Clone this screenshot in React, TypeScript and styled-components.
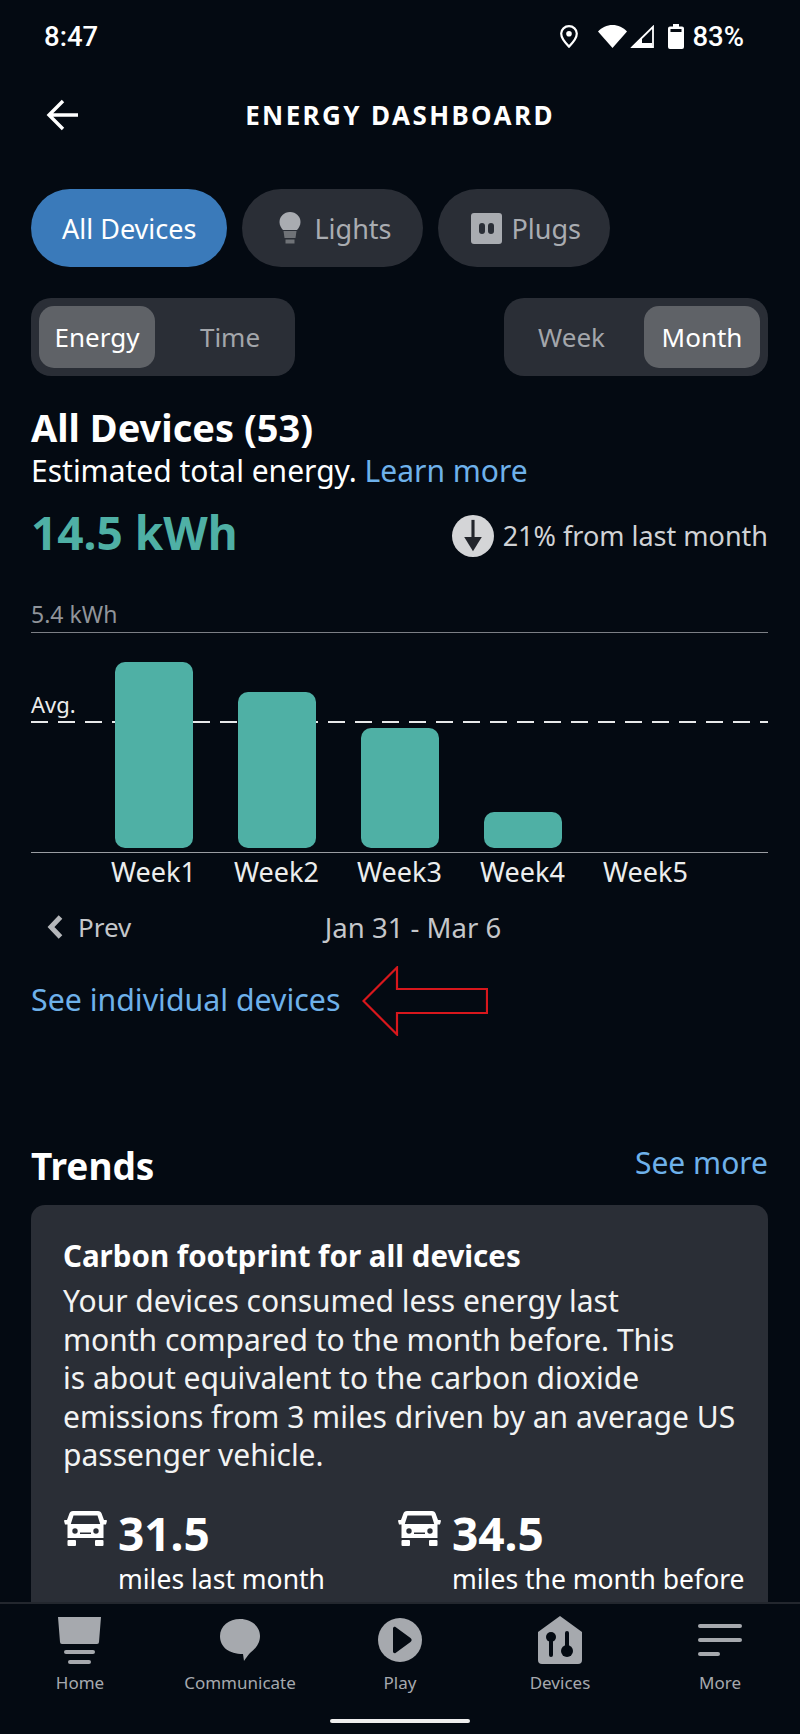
import React from 'react';
import styled, { createGlobalStyle } from 'styled-components';

const GlobalStyle = createGlobalStyle`
  html, body {
    margin: 0;
    padding: 0;
    background: #040a12;
  }
  * {
    box-sizing: border-box;
  }
`;

const Screen = styled.div`
  width: 800px;
  height: 1734px;
  display: flex;
  flex-direction: column;
  overflow: hidden;
  background: #040a12;
  color: #fff;
  font-family: 'Noto Sans', 'Open Sans', sans-serif;
`;

const StatusBar = styled.div`
  height: 72px;
  flex: 0 0 72px;
  display: flex;
  align-items: center;
  justify-content: space-between;
  padding: 0 56px 0 44px;
  font-family: Roboto, sans-serif;
  font-size: 27.5px;
  font-weight: 500;
`;

const StatusIcons = styled.div`
  display: flex;
  align-items: center;
`;

const Header = styled.header`
  position: relative;
  height: 86px;
  flex: 0 0 86px;
  display: flex;
  align-items: center;
  justify-content: center;
  padding-bottom: 1px;
`;

const BackButton = styled.div`
  position: absolute;
  left: 46px;
  top: 27px;
  display: flex;
`;

const Title = styled.h1`
  margin: 0;
  font-size: 26px;
  font-weight: 700;
  letter-spacing: 2.4px;
`;

const Main = styled.main`
  flex: 1;
  min-height: 0;
  overflow: hidden;
  padding: 31px 32px 0 31px;
`;

const Chips = styled.div`
  display: flex;
  gap: 15px;
`;

const Chip = styled.div<{ $active?: boolean; $lead?: number; $trail?: number; $gap?: number }>`
  height: 78px;
  padding: 0 ${({ $trail = 31 }) => $trail}px 0 ${({ $lead = 31 }) => $lead}px;
  display: flex;
  align-items: center;
  gap: ${({ $gap = 13 }) => $gap}px;
  border-radius: 39px;
  font-size: 27px;
  background: ${({ $active }) => ($active ? '#3a7aba' : '#2a2e36')};
  color: ${({ $active }) => ($active ? '#fff' : '#a9acb1')};
`;

const Toggles = styled.div`
  display: flex;
  justify-content: space-between;
  margin-top: 31px;
`;

const Toggle = styled.div`
  width: 264px;
  height: 78px;
  padding: 8px;
  display: flex;
  border-radius: 20px;
  background: #2a2e36;
`;

const ToggleOption = styled.div<{ $active?: boolean; $insetLeft?: number; $insetRight?: number }>`
  flex: ${({ $active }) => ($active ? '0 0 116px' : '1')};
  display: flex;
  align-items: center;
  justify-content: center;
  padding: 0 ${({ $insetRight = 0 }) => $insetRight}px 0 ${({ $insetLeft = 0 }) => $insetLeft}px;
  border-radius: 15px;
  font-size: 26px;
  background: ${({ $active }) => ($active ? '#5f6267' : 'transparent')};
  color: ${({ $active }) => ($active ? '#fff' : '#a3a6ab')};
`;

const Heading = styled.h2`
  margin: 30px 0 0;
  font-size: 38px;
  line-height: 42px;
  font-weight: 700;
`;

const Subtitle = styled.p`
  margin: 2px 0 0;
  font-size: 30px;
  line-height: 42px;
`;

const Link = styled.span`
  color: #6eb1ea;
`;

const SummaryRow = styled.div`
  display: flex;
  align-items: center;
  justify-content: space-between;
  margin-top: 9px;
  height: 62px;
`;

const Total = styled.div`
  font-size: 46px;
  font-weight: 700;
  color: #4fb0a5;
`;

const Change = styled.div`
  display: flex;
  align-items: center;
  gap: 9px;
  padding-top: 7px;
  font-size: 27px;
  color: #d0d2d5;
`;

const MaxLabel = styled.div`
  margin-top: 33px;
  font-size: 23px;
  line-height: 36px;
  color: #90949a;
`;

const Chart = styled.div`
  position: relative;
  height: 221px;
  padding: 0 0 4px 84px;
  display: flex;
  align-items: flex-end;
  gap: 45px;
  border-top: 1px solid #7c7f85;
  border-bottom: 1px solid #9a9da2;
`;

const AvgLabel = styled.div`
  position: absolute;
  left: 0;
  top: 56px;
  font-size: 22px;
  line-height: 30px;
  color: #eceded;
`;

const AvgLine = styled.div`
  position: absolute;
  left: 0;
  right: 0;
  top: 88px;
  height: 2px;
  background: repeating-linear-gradient(90deg, #e8e9ea 0 17px, transparent 17px 27px);
`;

const Bar = styled.div`
  position: relative;
  width: 78px;
  border-radius: 10px;
  background: #4fb0a5;
`;

const WeekLabels = styled.div`
  display: flex;
  padding: 2px 0 0 61px;
`;

const WeekLabel = styled.div`
  width: 123px;
  text-align: center;
  font-size: 27px;
  line-height: 34px;
  color: #eceded;
`;

const Pager = styled.div`
  position: relative;
  display: flex;
  align-items: center;
  justify-content: center;
  margin-top: 18px;
  height: 40px;
  padding-left: 27px;
  font-size: 27.5px;
  color: #c5c7ca;
`;

const Prev = styled.div`
  position: absolute;
  left: 15px;
  top: 0;
  bottom: 0;
  display: flex;
  align-items: center;
  gap: 15px;
  font-size: 26px;
`;

const IndividualRow = styled.div`
  display: flex;
  align-items: center;
  gap: 22px;
  margin-top: 17px;
  height: 70px;
  font-size: 30.3px;
  color: #6eb1ea;
`;

const ArrowSvg = styled.svg`
  display: block;
  margin-top: 4px;
`;

const TrendsRow = styled.div`
  display: flex;
  align-items: center;
  justify-content: space-between;
  margin-top: 108px;
`;

const TrendsTitle = styled.h2`
  margin: 0;
  font-size: 37px;
  line-height: 48px;
  font-weight: 700;
`;

const SeeMore = styled.div`
  padding-bottom: 7px;
  font-size: 30px;
  color: #6eb1ea;
`;

const Card = styled.section`
  margin-top: 15px;
  padding: 31px 30px 0 32px;
  height: 420px;
  border-radius: 14px 14px 0 0;
  background: #2a2e36;
`;

const CardTitle = styled.h3`
  margin: 0;
  font-size: 29.5px;
  line-height: 40px;
  font-weight: 700;
`;

const CardText = styled.p`
  margin: 6px 0 0;
  font-size: 30px;
  line-height: 38.6px;
  color: #f2f3f3;
`;

const Stats = styled.div`
  display: flex;
  margin-top: 30px;
  padding-left: 1px;
`;

const Stat = styled.div`
  flex: 0 0 334px;
  display: flex;
  gap: 11px;
`;

const CarSlot = styled.div`
  padding-top: 6px;
`;

const StatValue = styled.div`
  font-size: 46px;
  line-height: 56px;
  font-weight: 700;
`;

const StatCaption = styled.div`
  font-size: 26.5px;
  line-height: 36px;
  white-space: nowrap;
`;

const TabBar = styled.nav`
  height: 132px;
  flex: 0 0 132px;
  display: flex;
  justify-content: space-around;
  padding: 11px 0 0;
  border-top: 2px solid #23272e;
  background: #040a12;
  position: relative;
`;

const Tab = styled.div`
  width: 160px;
  display: flex;
  flex-direction: column;
  align-items: center;
  font-size: 17px;
  color: #a6a9ae;
`;

const TabIcon = styled.div`
  height: 50px;
  display: flex;
  align-items: center;
  justify-content: center;
`;

const TabLabel = styled.div`
  margin-top: 6px;
  line-height: 24px;
`;

const HomeIndicator = styled.div`
  position: absolute;
  left: 330px;
  bottom: 11px;
  width: 140px;
  height: 4px;
  border-radius: 2px;
  background: #eeeeee;
`;

const StatusIcon = styled.svg<{ $gap: number }>`
  display: block;
  margin-right: ${({ $gap }) => $gap}px;
`;

const PinIcon = () => (
  <StatusIcon $gap={20} width="18" height="23" viewBox="0 0 18 23">
    <path d="M9 1.200C4.700 1.200 1.200 4.500 1.200 8.600c0 4.600 4.500 9.800 7.800 13 3.300-3.200 7.800-8.400 7.800-13 0-4.100-3.500-7.400-7.800-7.400z" fill="none" stroke="#fff" strokeWidth="2.200" />
    <circle cx="9" cy="8.800" r="2.800" fill="#fff" />
  </StatusIcon>
);

const WifiIcon = () => (
  <StatusIcon $gap={3} width="29" height="23" viewBox="0 0 29 23">
    <path d="M0 6.500C3.800 2.500 8.800 0 14.500 0S25.200 2.500 29 6.500L14.500 23z" fill="#fff" />
  </StatusIcon>
);

const SignalIcon = () => (
  <StatusIcon $gap={14} width="24" height="23" viewBox="0 0 24 23">
    <path d="M2.500 22L23 1.800V22z" fill="none" stroke="#fff" strokeWidth="1.800" />
    <path d="M1 23l11-11v11z" fill="#fff" />
    <rect x="12" y="18" width="10" height="5" fill="#fff" />
  </StatusIcon>
);

const BatteryIcon = () => (
  <StatusIcon $gap={8} width="16" height="25" viewBox="0 0 16 25">
    <path d="M5 0h6v2.500h3a2 2 0 0 1 2 2V23a2 2 0 0 1-2 2H2a2 2 0 0 1-2-2V4.500a2 2 0 0 1 2-2h3z" fill="#fff" />
    <rect x="2.500" y="5" width="11" height="3" fill="#040a12" />
  </StatusIcon>
);

const BackIcon = () => (
  <svg width="33" height="32" viewBox="0 0 33 32">
    <path d="M32 16H4M17 2L3 16l14 14" fill="none" stroke="#fff" strokeWidth="3.400" />
  </svg>
);

const BulbIcon = () => (
  <svg width="22" height="32" viewBox="0 0 22 32">
    <path d="M11 0C5 0 0.500 4.500 0.500 10c0 3.500 1.800 6 3.500 8h14c1.700-2 3.500-4.500 3.500-8C21.500 4.500 17 0 11 0z" fill="#a9acb1" />
    <path d="M4.500 19h13l-1 7h-11z" fill="#6f7277" />
    <rect x="6.500" y="27.500" width="9" height="4" fill="#6f7277" />
  </svg>
);

const PlugIcon = () => (
  <svg width="31" height="31" viewBox="0 0 31 31">
    <rect width="31" height="31" rx="3" fill="#a9acb1" />
    <rect x="8" y="10" width="6" height="11" rx="3" fill="#2a2e36" />
    <rect x="17" y="10" width="6" height="11" rx="3" fill="#2a2e36" />
  </svg>
);

const DownIcon = () => (
  <svg width="42" height="42" viewBox="0 0 43 43">
    <circle cx="21.500" cy="21.500" r="21.500" fill="#d4d5d7" />
    <path d="M21.500 5v22" stroke="#22252b" strokeWidth="3.200" />
    <path d="M12.500 22.500h18L21.500 37z" fill="#22252b" />
  </svg>
);

const ChevronIcon = () => (
  <svg width="17" height="24" viewBox="0 0 17 24">
    <path d="M14.500 2L5 12l9.500 10" fill="none" stroke="#b5b7ba" strokeWidth="5" />
  </svg>
);

const RedArrow = () => (
  <ArrowSvg width="126" height="70" viewBox="0 0 126 70">
    <path d="M1.500 35L35 1.500V23H125V47H35V68.500z" fill="none" stroke="#d8171c" strokeWidth="2.200" />
  </ArrowSvg>
);

const CarIcon = () => (
  <svg width="43" height="35" viewBox="0 0 43 35">
    <path
      fillRule="evenodd"
      d="M9 0H34C36 0 37 1 37.600 2.500L40 9H42C43 9 43 10 42.700 11L42 13.500H39.500V27H3.500V13.500H1L.3 11C0 10 0 9 1 9H3L5.400 2.500C6 1 7 0 9 0ZM9.500 4.500L6.800 13H36.200L33.500 4.500ZM11 17.300a2.700 2.700 0 1 0 0 5.400 2.700 2.700 0 0 0 0-5.400ZM32 17.300a2.700 2.700 0 1 0 0 5.400 2.700 2.700 0 0 0 0-5.400ZM16 21.500V23H27V21.500Z"
      fill="#fff"
    />
    <rect x="3.500" y="29" width="8.500" height="6" rx="1" fill="#fff" />
    <rect x="31" y="29" width="8.500" height="6" rx="1" fill="#fff" />
  </svg>
);

const HomeIcon = () => (
  <svg width="44" height="48" viewBox="0 0 44 48">
    <path d="M0 1h43l-2 25a2 2 0 0 1-2 2H4a2 2 0 0 1-2-2z" fill="#a6a9ae" />
    <rect x="6" y="34" width="31" height="4" rx="2" fill="#a6a9ae" />
    <rect x="10" y="44" width="23" height="4" rx="2" fill="#a6a9ae" />
  </svg>
);

const CommunicateIcon = () => (
  <svg width="40" height="42" viewBox="0 0 40 42">
    <path d="M20 0c11 0 20 7 20 17 0 8-5 13-10 17-2 2-4 5-6 8l-1-7C9 35 0 28 0 17 0 7 9 0 20 0z" fill="#a6a9ae" />
  </svg>
);

const PlayIcon = () => (
  <svg width="44" height="44" viewBox="0 0 44 44">
    <circle cx="22" cy="22" r="22" fill="#a6a9ae" />
    <path d="M15 10.500c0-1.500 1.500-2 2.500-1.500l15 11c1.500 1 1.500 3 0 4l-15 11c-1 .5-2.500 0-2.500-1.500z" fill="#040a12" />
  </svg>
);

const DevicesIcon = () => (
  <svg width="44" height="48" viewBox="0 0 44 48">
    <path d="M22 0l22 16v28a4 4 0 0 1-4 4H4a4 4 0 0 1-4-4V16z" fill="#a6a9ae" />
    <circle cx="13" cy="21" r="5" fill="#040a12" />
    <rect x="11" y="23" width="4" height="18" rx="2" fill="#040a12" />
    <circle cx="29" cy="35" r="6" fill="#040a12" />
    <rect x="27" y="15" width="4" height="20" rx="2" fill="#040a12" />
  </svg>
);

const MoreIcon = () => (
  <svg width="44" height="32" viewBox="0 0 44 32">
    <rect y="0" width="44" height="4" rx="2" fill="#a6a9ae" />
    <rect y="14" width="44" height="4" rx="2" fill="#a6a9ae" />
    <rect y="28" width="22" height="4" rx="2" fill="#a6a9ae" />
  </svg>
);

const bars = [186, 156, 120, 36];
const weeks = ['Week1', 'Week2', 'Week3', 'Week4', 'Week5'];
const tabs = [
  { label: 'Home', icon: <HomeIcon /> },
  { label: 'Communicate', icon: <CommunicateIcon /> },
  { label: 'Play', icon: <PlayIcon /> },
  { label: 'Devices', icon: <DevicesIcon /> },
  { label: 'More', icon: <MoreIcon /> }
];

export default function App() {
  return (
    <Screen>
      <GlobalStyle />
      <StatusBar>
        <span>8:47</span>
        <StatusIcons>
          <PinIcon />
          <WifiIcon />
          <SignalIcon />
          <BatteryIcon />
          <span>83%</span>
        </StatusIcons>
      </StatusBar>
      <Header>
        <BackButton><BackIcon /></BackButton>
        <Title>ENERGY DASHBOARD</Title>
      </Header>
      <Main>
        <Chips>
          <Chip $active>All Devices</Chip>
          <Chip $lead={37}><BulbIcon />Lights</Chip>
          <Chip $lead={33} $trail={29} $gap={10}><PlugIcon />Plugs</Chip>
        </Chips>
        <Toggles>
          <Toggle>
            <ToggleOption $active>Energy</ToggleOption>
            <ToggleOption $insetLeft={18}>Time</ToggleOption>
          </Toggle>
          <Toggle>
            <ToggleOption $insetRight={13}>Week</ToggleOption>
            <ToggleOption $active>Month</ToggleOption>
          </Toggle>
        </Toggles>
        <Heading>All Devices (53)</Heading>
        <Subtitle>Estimated total energy. <Link>Learn more</Link></Subtitle>
        <SummaryRow>
          <Total>14.5 kWh</Total>
          <Change><DownIcon />21% from last month</Change>
        </SummaryRow>
        <MaxLabel>5.4 kWh</MaxLabel>
        <Chart>
          <AvgLabel>Avg.</AvgLabel>
          <AvgLine />
          {bars.map((height, i) => <Bar key={i} style={{ height }} />)}
        </Chart>
        <WeekLabels>
          {weeks.map(week => <WeekLabel key={week}>{week}</WeekLabel>)}
        </WeekLabels>
        <Pager>
          <Prev><ChevronIcon />Prev</Prev>
          <span>Jan 31 - Mar 6</span>
        </Pager>
        <IndividualRow>
          <span>See individual devices</span>
          <RedArrow />
        </IndividualRow>
        <TrendsRow>
          <TrendsTitle>Trends</TrendsTitle>
          <SeeMore>See more</SeeMore>
        </TrendsRow>
        <Card>
          <CardTitle>Carbon footprint for all devices</CardTitle>
          <CardText>
            Your devices consumed less energy last<br />
            month compared to the month before. This<br />
            is about equivalent to the carbon dioxide<br />
            emissions from 3 miles driven by an average US<br />
            passenger vehicle.
          </CardText>
          <Stats>
            <Stat>
              <CarSlot><CarIcon /></CarSlot>
              <div>
                <StatValue>31.5</StatValue>
                <StatCaption>miles last month</StatCaption>
              </div>
            </Stat>
            <Stat>
              <CarSlot><CarIcon /></CarSlot>
              <div>
                <StatValue>34.5</StatValue>
                <StatCaption>miles the month before</StatCaption>
              </div>
            </Stat>
          </Stats>
        </Card>
      </Main>
      <TabBar>
        {tabs.map(({ label, icon }) => (
          <Tab key={label}>
            <TabIcon>{icon}</TabIcon>
            <TabLabel>{label}</TabLabel>
          </Tab>
        ))}
        <HomeIndicator />
      </TabBar>
    </Screen>
  );
}
